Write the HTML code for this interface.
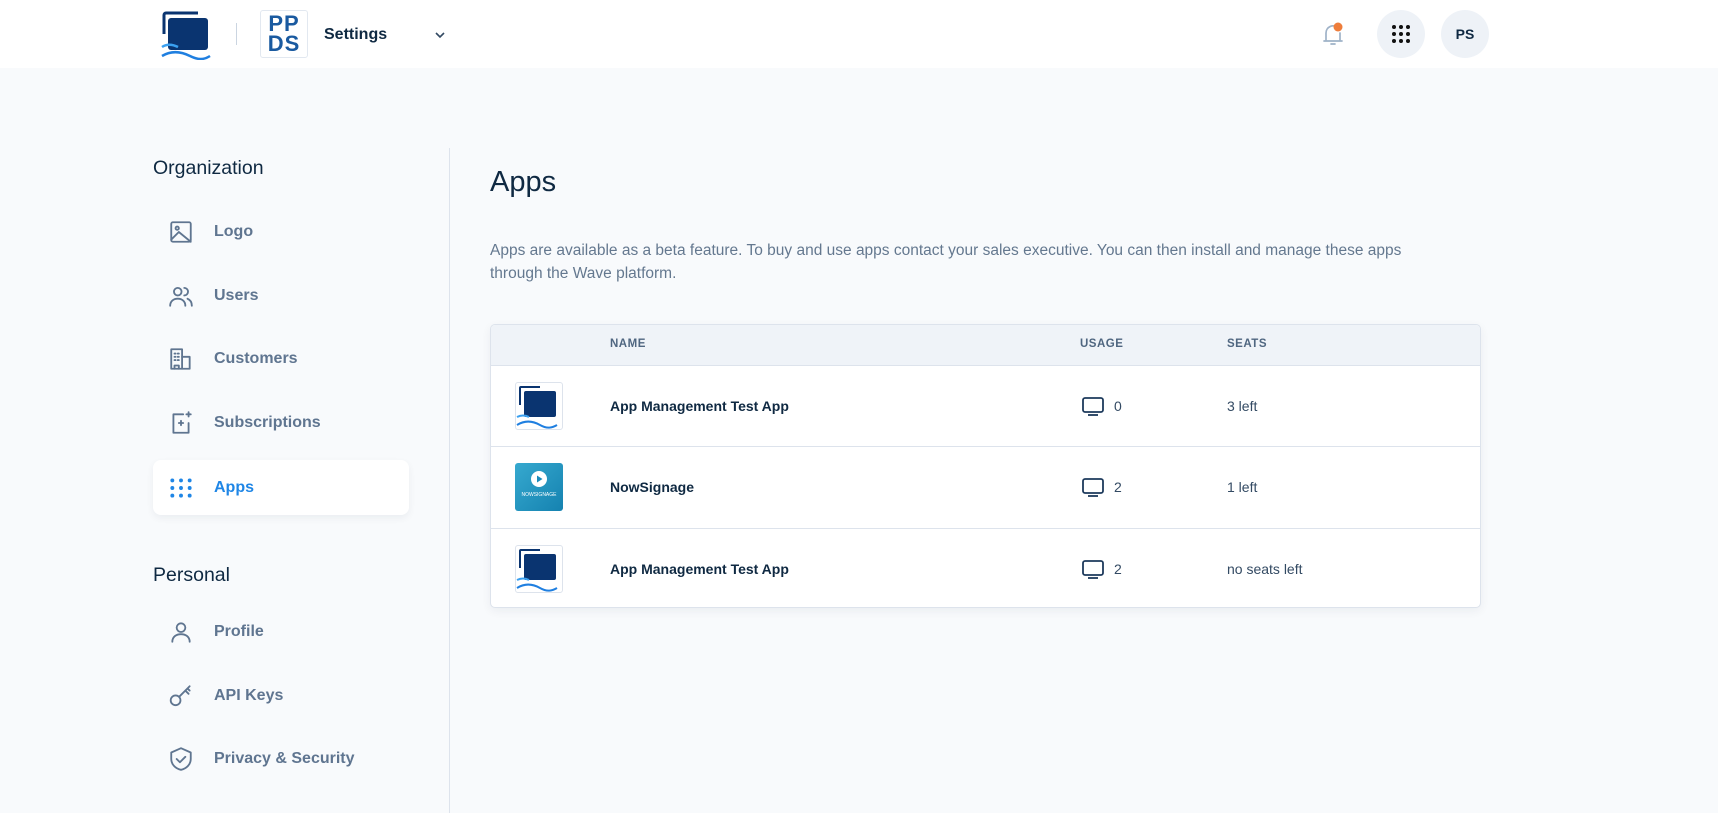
<!DOCTYPE html>
<html><head><meta charset="utf-8"><style>
*{margin:0;padding:0;box-sizing:border-box}
body{width:1718px;height:813px;background:#f8fafc;font-family:"Liberation Sans",sans-serif;position:relative;overflow:hidden;color:#0f2942}
.a{position:absolute}
.hdr{left:0;top:0;width:1718px;height:68px;background:#fff}
.nav{left:168px;font-size:16px;font-weight:bold;color:#5f7590;display:flex;align-items:center;height:24px}
.nav svg{width:26px;height:26px;margin-right:20px;stroke:#5f7590;fill:none;stroke-width:1.7;stroke-linecap:round;stroke-linejoin:round}
.sec{left:153px;font-size:19.5px;color:#0f2942}
.th{top:338px;font-size:11.5px;font-weight:bold;color:#4f6680;letter-spacing:.5px}
.row{left:490px;width:991px;height:81px;border-top:1px solid #dde3ec}
.nm{position:absolute;left:120px;top:32px;font-size:14px;font-weight:bold;color:#0f2942}
.us{position:absolute;left:591px;top:28px;font-size:14px;color:#334a63;display:flex;align-items:center}
.st{position:absolute;left:737px;top:32px;font-size:14px;color:#334a63}
.ic{position:absolute;left:25px;top:16px;width:48px;height:48px;border:1px solid #dde3ec;border-radius:3px;background:#fff;overflow:hidden}
</style></head><body>
<div class="a hdr"></div>
<svg class="a" style="left:160px;top:10px" width="52" height="50" viewBox="0 0 52 50"><path d="M4 24V5a2 2 0 0 1 2-2h32" stroke="#0a3470" stroke-width="3" fill="none"/><rect x="8" y="8" width="40" height="32" rx="3" fill="#0a3470"/><path d="M2 37c6-4 12-2 16 0" stroke="#3aa0f0" stroke-width="2.5" fill="none"/><path d="M2 46c10-6 20-4 28 0s14 4 20 0" stroke="#1f7fe0" stroke-width="2.5" fill="none"/></svg>
<div class="a" style="left:236px;top:23px;width:1px;height:22px;background:#cbd5e1"></div>
<div class="a" style="left:260px;top:10px;width:48px;height:48px;border:1px solid #e2e8f0;border-radius:3px;background:#fff;font:bold 22px/20px 'Liberation Sans',sans-serif;color:#1a5aa0;text-align:center;padding-top:3px;letter-spacing:1px">PP<br>DS</div>
<div class="a" style="left:324px;top:26px;font-size:16px;font-weight:bold;color:#0f2942">Settings</div>
<svg class="a" style="left:433px;top:30px" width="14" height="10" viewBox="0 0 14 10"><path d="M3 3l4 4 4-4" stroke="#334a63" stroke-width="1.6" fill="none"/></svg>
<svg class="a" style="left:1321px;top:22px" width="24" height="26" viewBox="0 0 24 26"><path d="M5 18V11a7 7 0 0 1 12-5M19 11v7M3 19h18M10 22h4" stroke="#9fb2c8" stroke-width="1.7" fill="none" stroke-linecap="round"/><circle cx="17" cy="5" r="4.5" fill="#ee7d3b"/></svg>
<div class="a" style="left:1377px;top:10px;width:48px;height:48px;border-radius:50%;background:#eef2f7"></div>
<svg class="a" style="left:1391px;top:24px" width="20" height="20"><g fill="#111"><circle cx="3" cy="3" r="2"/><circle cx="10" cy="3" r="2"/><circle cx="17" cy="3" r="2"/><circle cx="3" cy="10" r="2"/><circle cx="10" cy="10" r="2"/><circle cx="17" cy="10" r="2"/><circle cx="3" cy="17" r="2"/><circle cx="10" cy="17" r="2"/><circle cx="17" cy="17" r="2"/></g></svg>
<div class="a" style="left:1441px;top:10px;width:48px;height:48px;border-radius:50%;background:#eef2f7;font-size:14px;font-weight:bold;line-height:48px;text-align:center;color:#0f2942">PS</div>

<div class="a sec" style="top:157px">Organization</div>
<div class="a nav" style="top:220px"><svg viewBox="0 0 24 24"><rect x="3" y="3" width="18" height="18" rx="1.5"/><circle cx="8.5" cy="8.5" r="1.5"/><path d="M3 19l7-7 11 9"/></svg>Logo</div>
<div class="a nav" style="top:284px"><svg viewBox="0 0 24 24"><circle cx="9" cy="8" r="3.5"/><path d="M2 21c0-4 3-6.5 7-6.5s7 2.5 7 6.5M15 4.5a3.5 3.5 0 0 1 0 7M18 14.5c2 .8 4 2.7 4 6.5"/></svg>Users</div>
<div class="a nav" style="top:347px"><svg viewBox="0 0 24 24"><rect x="3" y="3" width="10" height="18"/><path d="M13 10h7v11h-7M6 7h1M9 7h1M6 10h1M9 10h1M6 13h1M9 13h1M6 21v-3h4v3"/></svg>Customers</div>
<div class="a nav" style="top:411px"><svg viewBox="0 0 24 24"><path d="M14 4H5v17h14v-9"/><path d="M12 10v4M10 12h4M19 2v4M17 4h4"/></svg>Subscriptions</div>
<div class="a" style="left:153px;top:460px;width:256px;height:55px;background:#fff;border-radius:8px;box-shadow:0 3px 8px rgba(15,41,66,.06)"></div>
<div class="a nav" style="top:476px;color:#1f86e6"><svg viewBox="0 0 24 24" style="stroke:none;fill:#1f86e6"><circle cx="4" cy="5" r="1.8"/><circle cx="12" cy="5" r="1.8"/><circle cx="20" cy="5" r="1.8"/><circle cx="4" cy="12" r="1.8"/><circle cx="12" cy="12" r="1.8"/><circle cx="20" cy="12" r="1.8"/><circle cx="4" cy="19" r="1.8"/><circle cx="12" cy="19" r="1.8"/><circle cx="20" cy="19" r="1.8"/></svg>Apps</div>
<div class="a sec" style="top:564px">Personal</div>
<div class="a nav" style="top:620px"><svg viewBox="0 0 24 24"><circle cx="12" cy="8" r="4"/><path d="M4 21c0-4.5 3.5-7 8-7s8 2.5 8 7"/></svg>Profile</div>
<div class="a nav" style="top:684px"><svg viewBox="0 0 24 24"><circle cx="7" cy="16" r="4.5"/><path d="M10.5 12.5L20 3M16 7l3 3M18 5l2 2"/></svg>API Keys</div>
<div class="a nav" style="top:747px"><svg viewBox="0 0 24 24"><path d="M12 2l9 4v6c0 5-4 9-9 10-5-1-9-5-9-10V6z"/><path d="M8 12l3 3 5-5"/></svg>Privacy &amp; Security</div>
<div class="a" style="left:449px;top:148px;width:1px;height:665px;background:#dde3ec"></div>

<div class="a" style="left:490px;top:166px;font-size:29px;color:#0f2942">Apps</div>
<div class="a" style="left:490px;top:239px;width:950px;font-size:15.5px;line-height:23px;color:#64788f">Apps are available as a beta feature. To buy and use apps contact your sales executive. You can then install and manage these apps through the Wave platform.</div>

<div class="a" style="left:490px;top:324px;width:991px;height:284px;background:#fff;border:1px solid #dde3ec;border-radius:5px;box-shadow:0 3px 10px rgba(15,41,66,.06);overflow:hidden">
<div style="height:41px;background:#eff3f8"></div>
</div>
<div class="a th" style="left:610px">NAME</div>
<div class="a th" style="left:1080px">USAGE</div>
<div class="a th" style="left:1227px">SEATS</div>
<svg width="0" height="0" style="position:absolute"><defs><symbol id="lg" viewBox="0 0 48 48"><path d="M4 22V5a1 1 0 0 1 1-1h19" stroke="#0a3470" stroke-width="2" fill="none"/><rect x="8" y="8" width="32" height="26" rx="2" fill="#0a3470"/><path d="M1 34c4-2 8-2 12 0" stroke="#3aa0f0" stroke-width="2" fill="none"/><path d="M1 42c8-5 16-4 23 0s12 3 17 0" stroke="#1f7fe0" stroke-width="2" fill="none"/></symbol>
<symbol id="mon" viewBox="0 0 24 24"><rect x="2" y="4" width="20" height="14" rx="2" fill="none" stroke="#1d3a5c" stroke-width="1.8"/><path d="M7 21h10" stroke="#1d3a5c" stroke-width="1.8"/></symbol></defs></svg>
<div class="a row" style="top:365px;border-top:1px solid #dde3ec">
<div class="ic"><svg width="48" height="48"><use href="#lg"/></svg></div>
<div class="nm">App Management Test App</div>
<div class="us"><svg width="24" height="24" style="margin-right:9px"><use href="#mon"/></svg>0</div>
<div class="st">3 left</div></div>
<div class="a row" style="top:446px">
<div class="ic" style="border:none;background:linear-gradient(135deg,#36a9cf,#1582b0)"><svg width="48" height="48"><circle cx="24" cy="16" r="8" fill="#fff"/><path d="M22 12.5v7l5.5-3.5z" fill="#1a8bbb"/><text x="24" y="33" font-size="5" fill="#fff" text-anchor="middle" font-family="Liberation Sans">NOWSIGNAGE</text></svg></div>
<div class="nm">NowSignage</div>
<div class="us"><svg width="24" height="24" style="margin-right:9px"><use href="#mon"/></svg>2</div>
<div class="st">1 left</div></div>
<div class="a row" style="top:528px">
<div class="ic"><svg width="48" height="48"><use href="#lg"/></svg></div>
<div class="nm">App Management Test App</div>
<div class="us"><svg width="24" height="24" style="margin-right:9px"><use href="#mon"/></svg>2</div>
<div class="st">no seats left</div></div>
</body></html>
